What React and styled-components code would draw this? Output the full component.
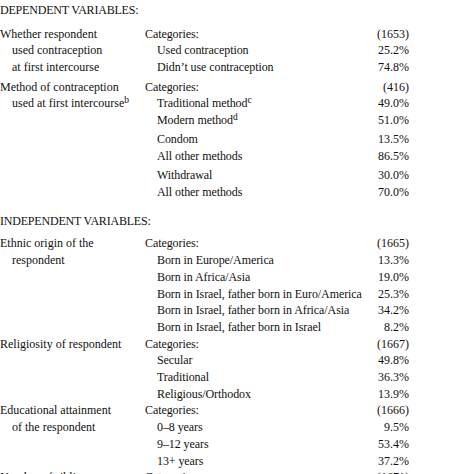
import React from "react";
import styled, { createGlobalStyle } from "styled-components";

const GlobalStyle = createGlobalStyle`
    html, body {
        margin:0;
        padding:0;
        background:#ffffff;
        overflow:hidden;
    }
`

const Page = styled.div`
    width:409px;
    padding-top:1.6px;
    font-family:"Liberation Serif", "Times New Roman", serif;
    font-size:12px;
    line-height:16.7px;
    color:#111111;
`

const SectionHeading = styled.div`
    margin-top:${(p) => p.$top || 0}px;
    margin-bottom:${(p) => p.$bottom || 0}px;
    letter-spacing:-0.2px;
`

const VariableBlock = styled.div`
    display:flex;
    margin-top:${(p) => p.$gap || 0}px;
`

const LabelColumn = styled.div`
    width:145px;
    flex-shrink:0;
`

const LabelLine = styled.div`
    padding-left:${(p) => (p.$indent ? 12 : 0)}px;
    white-space:nowrap;
`

const Body = styled.div`
    flex:1;
    display:flex;
    flex-direction:column;
`

const SubGroup = styled.div`
    margin-top:${(p) => p.$gap || 0}px;
`

const Row = styled.div`
    display:flex;
    justify-content:space-between;
`

const Category = styled.span`
    padding-left:${(p) => (p.$indent ? 12 : 0)}px;
    white-space:nowrap;
    letter-spacing:-0.08px;
`

const Value = styled.span`
    width:40px;
    text-align:right;
`

const Sup = styled.sup`
    font-size:9.5px;
    line-height:0;
    vertical-align:4px;
`

const upper = [
    {
        label: ["Whether respondent", "used contraception", "at first intercourse"],
        n: "(1653)",
        groups: [[["Used contraception", "25.2%"], ["Didn\u2019t use contraception", "74.8%"]]],
    },
    {
        label: ["Method of contraception", <>used at first intercourse<Sup>b</Sup></>],
        n: "(416)",
        gap: 3,
        groups: [
            [[<>Traditional method<Sup>c</Sup></>, "49.0%"], [<>Modern method<Sup>d</Sup></>, "51.0%"]],
            [["Condom", "13.5%"], ["All other methods", "86.5%"]],
            [["Withdrawal", "30.0%"], ["All other methods", "70.0%"]],
        ],
    },
]

const lower = [
    {
        label: ["Ethnic origin of the", "respondent"],
        n: "(1665)",
        groups: [[
            ["Born in Europe/America", "13.3%"],
            ["Born in Africa/Asia", "19.0%"],
            ["Born in Israel, father born in Euro/America", "25.3%"],
            ["Born in Israel, father born in Africa/Asia", "34.2%"],
            ["Born in Israel, father born in Israel", "8.2%"],
        ]],
    },
    {
        label: ["Religiosity of respondent"],
        n: "(1667)",
        groups: [[["Secular", "49.8%"], ["Traditional", "36.3%"], ["Religious/Orthodox", "13.9%"]]],
    },
    {
        label: ["Educational attainment", "of the respondent"],
        n: "(1666)",
        groups: [[["0\u20138 years", "9.5%"], ["9\u201312 years", "53.4%"], ["13+ years", "37.2%"]]],
    },
    {
        label: ["Number of siblings"],
        n: "(1671)",
        groups: [],
    },
]

const Variable = ({ item }) => (
    <VariableBlock $gap={item.gap}>
        <LabelColumn>
            {item.label.map((line, i) => (
                <LabelLine key={i} $indent={i > 0}>{line}</LabelLine>
            ))}
        </LabelColumn>
        <Body>
            <Row>
                <Category>Categories:</Category>
                <Value>{item.n}</Value>
            </Row>
            {item.groups.map((group, g) => (
                <SubGroup key={g} $gap={g > 0 ? 2.5 : 0}>
                    {group.map(([cat, val], r) => (
                        <Row key={r}>
                            <Category $indent>{cat}</Category>
                            <Value>{val}</Value>
                        </Row>
                    ))}
                </SubGroup>
            ))}
        </Body>
    </VariableBlock>
)

const App = () => {
    return (
        <>
            <GlobalStyle />
            <Page>
                <SectionHeading $bottom={7.3}>DEPENDENT VARIABLES:</SectionHeading>
                {upper.map((item, i) => <Variable key={i} item={item} />)}
                <SectionHeading $top={12.8} $bottom={5.3}>INDEPENDENT VARIABLES:</SectionHeading>
                {lower.map((item, i) => <Variable key={i} item={item} />)}
            </Page>
        </>
    );
}

export default App;
